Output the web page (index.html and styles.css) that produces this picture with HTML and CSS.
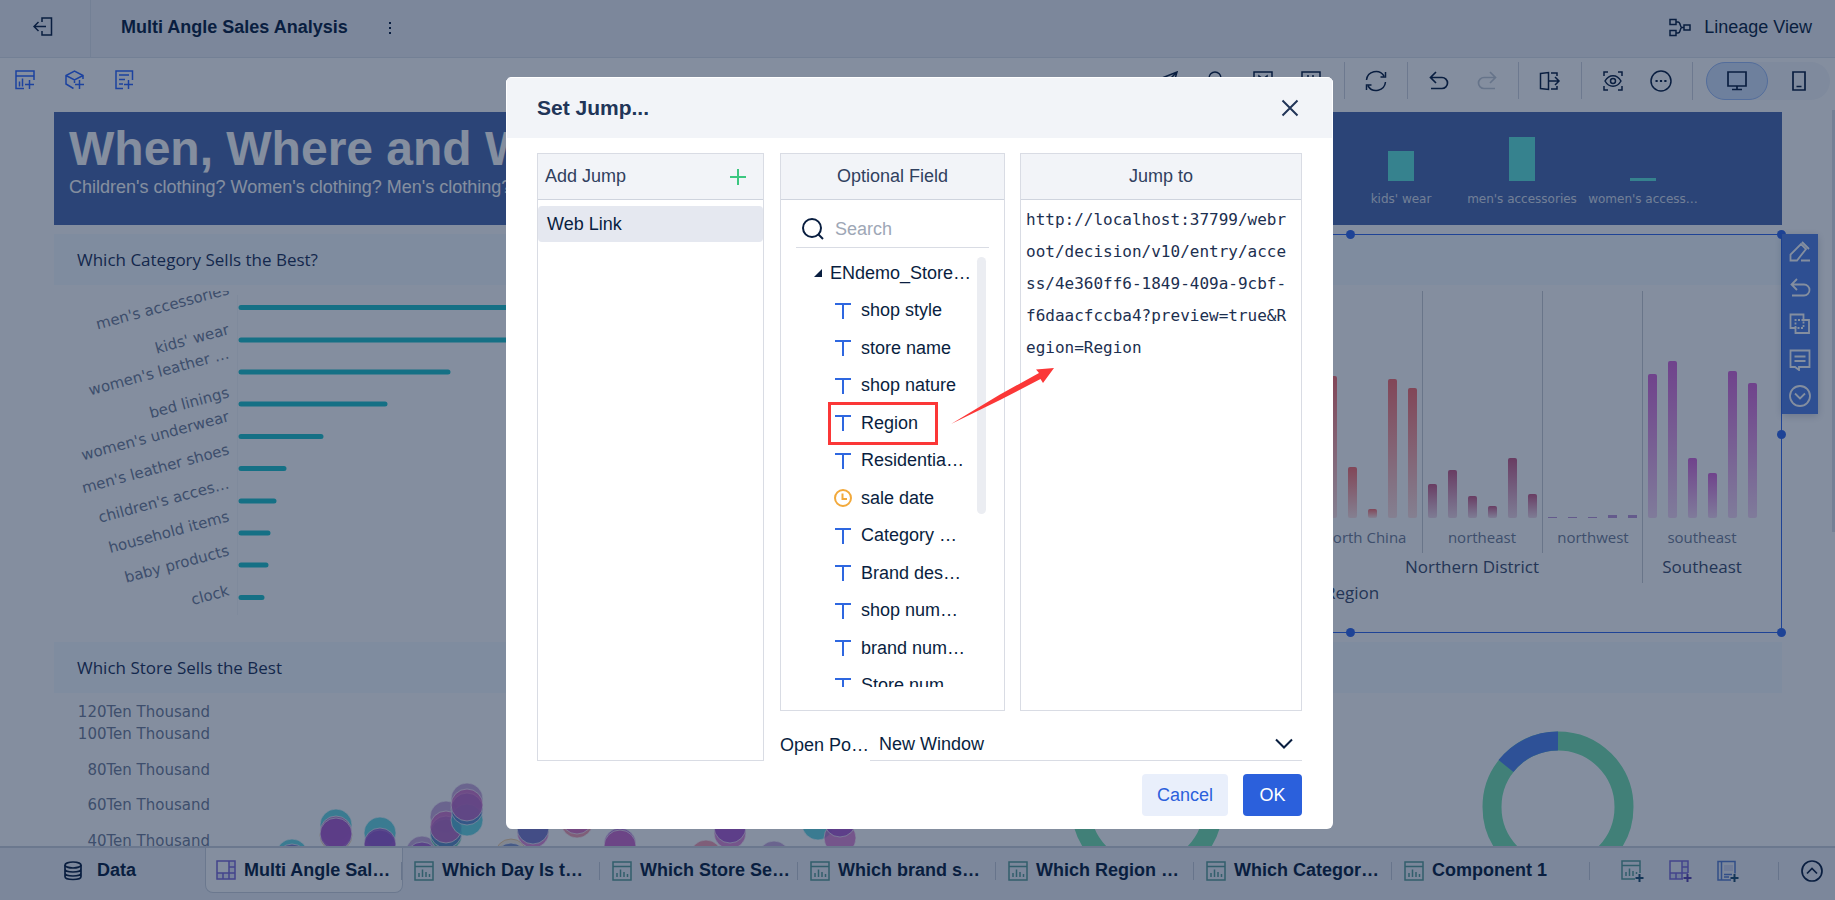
FILE: index.html
```html
<!DOCTYPE html>
<html lang="en">
<head>
<meta charset="utf-8">
<title>Multi Angle Sales Analysis</title>
<link rel="stylesheet" href="styles.css">
</head>
<body>
<div class="app">
  <header class="topbar">
    <button class="back" aria-label="Exit"><svg class="ic" width="20" height="20" viewBox="0 0 20 20"><path d="M9 5V1h9.500v17H9v-4M13 9.500H1M5.500 5L1 9.500 5.500 14"/></svg></button>
    <h1 class="doc-title">Multi Angle Sales Analysis</h1>
    <button class="kebab" aria-label="More"><svg width="4" height="14" viewBox="0 0 4 14"><path d="M1 1h2v2H1zM1 6h2v2H1zM1 11h2v2H1z" fill="#091e40"/></svg></button>
    <a class="lineage" href="#"><svg class="ic" width="22" height="20" viewBox="0 0 22 20"><path d="M1 1.500h6v5H1zM1 12.500h6v5H1zM15 7h6v5h-6zM7 4h2c3 0 1.500 5.500 4 5.500h2M7 15h2c3 0 1.500-5.500 4-5.500"/></svg>Lineage View</a>
  </header>

  <div class="toolbar">
    <div class="tools-left">
      <button aria-label="Add component"><svg class="ic blue" width="20" height="20" viewBox="0 0 20 20"><path d="M9 18.500H1V1h18v9M1 6h18M4.500 16.500v-5M7.500 16.500V8.500M14.500 10v9M10 14.500h9"/></svg></button>
      <button aria-label="Add model"><svg class="ic blue" width="20" height="20" viewBox="0 0 20 20"><path d="M8.500 18.500L1 14V5.500L9.500 1 18 5.500V9M1 5.500L9.500 10 18 5.500M9.500 10v3M14.500 10v9M10 14.500h9"/></svg></button>
      <button aria-label="Add text"><svg class="ic blue" width="20" height="20" viewBox="0 0 20 20"><path d="M8 18.500H1V1h16.500v9M4 5h10M4 9.500h6M4 14h4M13.500 10v9M9 14.500h9"/></svg></button>
    </div>
    <div class="tools-right">
      <div class="tgroup first">
        <button aria-label="Share"><svg class="ic" width="22" height="20" viewBox="0 0 22 20"><path d="M1 9L21 1l-5 17-6-6zM10 12L21 1"/></svg></button>
        <button aria-label="Alerts"><svg class="ic" width="20" height="20" viewBox="0 0 20 20"><path d="M4 15V7a6 6 0 0 1 12 0v8zM2 15h16M8 18h4"/></svg></button>
        <button aria-label="Template"><svg class="ic" width="20" height="20" viewBox="0 0 20 20"><path d="M1 1h18v17H1zM6 10V5l4 3 4-3v5"/></svg></button>
        <button aria-label="Layout"><svg class="ic" width="20" height="20" viewBox="0 0 20 20"><path d="M1 1h18v17H1zM7 4v6M12 4v6"/></svg></button>
      </div>
      <div class="tgroup">
        <button aria-label="Refresh"><svg class="ic" width="22" height="22" viewBox="0 0 22 22"><path d="M1.500 10A9.500 9.500 0 0 1 19 6M20.500 2v5h-5M20.500 12A9.500 9.500 0 0 1 3 16M1.500 20v-5h5"/></svg></button>
      </div>
      <div class="tgroup">
        <button aria-label="Undo"><svg class="ic thick" width="20" height="20" viewBox="0 0 20 20"><path d="M7 1L1.500 6.500 7 12M1.500 6.500H13a5.500 5.500 0 0 1 0 11H2"/></svg></button>
        <button aria-label="Redo"><svg class="ic thick off" width="20" height="20" viewBox="0 0 20 20"><path d="M13 1l5.500 5.500L13 12M18.500 6.500H7a5.500 5.500 0 0 0 0 11h11"/></svg></button>
      </div>
      <div class="tgroup">
        <button aria-label="Export"><svg class="ic" width="22" height="20" viewBox="0 0 22 20"><path d="M1.500 2.500l8-1v17l-8-1zM12 2h6v3M12 18h6v-3M9.500 10H20M16 6l4 4-4 4"/></svg></button>
      </div>
      <div class="tgroup">
        <button aria-label="Preview"><svg class="ic" width="20" height="20" viewBox="0 0 20 20"><path d="M1 5V1h4M15 1h4v4M19 15v4h-4M5 19H1v-4M2 10c4-7 12-7 16 0-4 7-12 7-16 0z"/><circle cx="10" cy="10" r="2.500"/></svg></button>
        <button aria-label="More actions"><svg class="ic" width="22" height="22" viewBox="0 0 22 22"><circle cx="11" cy="11" r="10"/><path stroke-width="2" d="M5.500 11h2.200M9.900 11h2.200M14.300 11h2.200"/></svg></button>
      </div>
      <div class="tgroup devices-group">
        <div class="devices">
          <button class="on" aria-label="Desktop"><svg class="ic thick" width="20" height="20" viewBox="0 0 20 20"><path d="M1 1h18v14H1zM10 15v3.500M5 18.500h10"/></svg></button>
          <button aria-label="Phone"><svg class="ic thick" width="14" height="20" viewBox="0 0 14 20"><path d="M1 1h12v18H1zM4.500 15.500h5"/></svg></button>
        </div>
      </div>
    </div>
  </div>

  <main class="canvas">
    <section class="banner">
      <div class="banner-text">
        <h2>When, Where and What to Sell</h2>
        <p>Children's clothing? Women's clothing? Men's clothing?</p>
      </div>
      <svg class="banner-chart" width="440" height="113" viewBox="-40 0 440 113">
        <path class="mint" d="M6 39h26v30H6zM127 25h26v44h-26zM248 66h26v3h-26z"/>
        <text x="19" y="91">kids' wear</text><text x="140" y="91">men's accessories</text><text x="261" y="91">women's access…</text>
      </svg>
    </section>

    <div class="cards">
      <section class="card">
        <h3>Which Category Sells the Best?</h3>
        <svg class="chart" viewBox="0 0 864 348">
          <path class="axis" d="M183.500 10v320"/>
          <g class="hbars">
            <path d="M187 22.500H700M187 55H600M187 87H394M187 119H331M187 151.500H267M187 183.500H230M187 216H220M187 248H214M187 280H212M187 312.500H208"/>
          </g>
          <svg y="6" width="864" height="342" viewBox="0 6 864 342">
            <g class="slant">
              <text transform="translate(176 9) rotate(-15)">men's accessories</text>
              <text transform="translate(176 49) rotate(-15)">kids' wear</text>
              <text transform="translate(176 73) rotate(-15)">women's leather …</text>
              <text transform="translate(176 112) rotate(-15)">bed linings</text>
              <text transform="translate(176 136) rotate(-15)">women's underwear</text>
              <text transform="translate(176 169) rotate(-15)">men's leather shoes</text>
              <text transform="translate(176 203) rotate(-15)">children's acces…</text>
              <text transform="translate(176 236) rotate(-15)">household items</text>
              <text transform="translate(176 270) rotate(-15)">baby products</text>
              <text transform="translate(176 310) rotate(-15)">clock</text>
            </g>
          </svg>
        </svg>
      </section>

      <section class="card selected">
        <h3></h3>
        <svg class="chart" viewBox="0 0 864 348">
          <defs>
            <linearGradient id="gr" x2="0" y2="1"><stop stop-color="#fa6f70"/><stop offset="1" stop-color="#fa6f70" stop-opacity=".2"/></linearGradient>
            <linearGradient id="gm" x2="0" y2="1"><stop stop-color="#c85b84"/><stop offset="1" stop-color="#c86ba0" stop-opacity=".25"/></linearGradient>
            <linearGradient id="gp" x2="0" y2="1"><stop stop-color="#d667d8"/><stop offset="1" stop-color="#d667d8" stop-opacity=".25"/></linearGradient>
          </defs>
          <path class="split" d="M504.500 6v262M624.500 6v262M724.500 6v292"/>
          <g fill="url(#gr)">
            <rect x="410" y="91" width="9" height="142" rx="2"/><rect x="430" y="182" width="9" height="51" rx="2"/><rect x="450" y="224" width="9" height="9" rx="2"/><rect x="470" y="94" width="9" height="139" rx="2"/><rect x="490" y="103" width="9" height="130" rx="2"/>
          </g>
          <g fill="url(#gm)">
            <rect x="510" y="199" width="9" height="34" rx="2"/><rect x="530" y="185" width="9" height="48" rx="2"/><rect x="550" y="211" width="9" height="22" rx="2"/><rect x="570" y="221" width="9" height="12" rx="2"/><rect x="590" y="173" width="9" height="60" rx="2"/><rect x="610" y="209" width="9" height="24" rx="2"/>
          </g>
          <path fill="#be97d8" d="M630 232h9v1h-9zM650 232h9v1h-9zM670 232h9v1h-9zM690 230h9v3h-9zM710 230h9v3h-9z"/>
          <g fill="url(#gp)">
            <rect x="730" y="89" width="9" height="144" rx="2"/><rect x="750" y="76" width="9" height="157" rx="2"/><rect x="770" y="173" width="9" height="60" rx="2"/><rect x="790" y="188" width="9" height="45" rx="2"/><rect x="810" y="86" width="9" height="147" rx="2"/><rect x="830" y="98" width="9" height="135" rx="2"/>
          </g>
          <g class="cats">
            <text x="446" y="258">North China</text><text x="564" y="258">northeast</text><text x="675" y="258">northwest</text><text x="784" y="258">southeast</text>
          </g>
          <g class="groups">
            <text x="554" y="288">Northern District</text><text x="784" y="288">Southeast</text><text x="434" y="314">Region</text>
          </g>
        </svg>
        <i class="handle tl"></i><i class="handle tm"></i><i class="handle tr"></i><i class="handle mr"></i><i class="handle br"></i><i class="handle bm"></i>
        <div class="sidebar">
          <button aria-label="Edit"><svg class="ic" width="22" height="22" viewBox="0 0 22 22"><path d="M1.500 19.500v-6L12 3l5 5L8 19.500zM13 1l7 7M12 19.500h9"/></svg></button>
          <button aria-label="Revert"><svg class="ic" width="22" height="22" viewBox="0 0 22 22"><path d="M8 2L2.500 7.500 8 13M2.500 7.500H15a5.500 5.500 0 0 1 0 11H3"/></svg></button>
          <button aria-label="Copy"><svg class="ic" width="22" height="22" viewBox="0 0 22 22"><path d="M6.500 15H1.500V1.500h13V7h5.500v13H6.500z"/><path stroke-dasharray="2 1.500" d="M6.500 15V7h8v8z"/></svg></button>
          <button aria-label="Comment"><svg class="ic" width="22" height="22" viewBox="0 0 22 22"><path d="M1.500 1.500h19V18H10v3l-4-3H1.500zM5.500 7.500h11M5.500 12h11"/></svg></button>
          <button aria-label="More"><svg class="ic" width="22" height="22" viewBox="0 0 22 22"><circle cx="11" cy="11" r="10"/><path d="M6 8.500l5 5 5-5"/></svg></button>
        </div>
      </section>

      <section class="card">
        <h3>Which Store Sells the Best</h3>
        <svg class="chart" viewBox="0 0 864 348">
          <g class="yaxis">
            <text x="156" y="24">120Ten Thousand</text><text x="156" y="46">100Ten Thousand</text><text x="156" y="82">80Ten Thousand</text><text x="156" y="117">60Ten Thousand</text><text x="156" y="153">40Ten Thousand</text>
          </g>
          <g class="bubbles">
            <circle class="c" cx="238" cy="162" r="16"/><circle class="p" cx="238" cy="167" r="16"/>
            <circle class="c" cx="282" cy="132" r="16"/><circle class="o" cx="282" cy="142" r="16"/><circle class="k" cx="282" cy="139" r="16"/><circle class="v" cx="282" cy="141" r="16"/>
            <circle class="c" cx="326" cy="140" r="16"/><circle class="p" cx="326" cy="153" r="16"/><circle class="v" cx="326" cy="151" r="16"/>
            <circle class="m" cx="368" cy="159" r="16"/><circle class="v" cx="368" cy="165" r="16"/>
            <circle class="m" cx="392" cy="124" r="16"/><circle class="g" cx="392" cy="142" r="16"/><circle class="b" cx="392" cy="139" r="16"/><circle class="k" cx="392" cy="134" r="16"/>
            <circle class="m" cx="413" cy="106" r="16"/><circle class="c" cx="413" cy="127" r="16"/><circle class="b" cx="413" cy="116" r="16"/><circle class="k" cx="413" cy="112" r="16"/>
            <circle class="o" cx="457" cy="162" r="16"/><circle class="b" cx="457" cy="166" r="16"/>
            <circle class="k" cx="479" cy="139" r="16"/><circle class="b" cx="479" cy="135" r="16"/>
            <circle class="s" cx="523" cy="129" r="16"/><circle class="k" cx="523" cy="125" r="16"/>
            <circle class="v" cx="566" cy="151" r="16"/><circle class="k" cx="566" cy="153" r="16"/>
            <circle class="s" cx="652" cy="163" r="16"/><circle class="k" cx="676" cy="140" r="16"/><circle class="v" cx="676" cy="134" r="16"/>
            <circle class="m" cx="720" cy="164" r="16"/>
            <circle class="c" cx="764" cy="131" r="16"/><circle class="k" cx="786" cy="145" r="16"/><circle class="v" cx="786" cy="128" r="16"/>
          </g>
        </svg>
      </section>

      <section class="card">
        <h3></h3>
        <svg class="chart" viewBox="0 0 864 348">
          <g class="donut">
            <circle cx="229" cy="114" r="66"/><circle cx="640" cy="114" r="66"/>
            <path d="M588 73A66 66 0 0 1 640 48"/>
          </g>
        </svg>
      </section>
    </div>
    <i class="scroll-thumb"></i>
  </main>

  <footer class="tabs">
    <button class="data"><svg class="ic thick" width="18" height="20" viewBox="0 0 18 20"><ellipse cx="9" cy="4" rx="8" ry="3"/><path d="M1 4v11.500c0 4 16 4 16 0V4M1 8c0 4 16 4 16 0M1 12c0 4 16 4 16 0"/></svg>Data</button>
    <button class="tab active"><svg class="ic violet" width="20" height="20" viewBox="0 0 20 20"><path class="tint" d="M13 1h6v18H1v-6h12z"/><path d="M1 1h18v18H1zM13 1v18M1 13h18M13 7h6M7 13v6"/></svg>Multi Angle Sal…</button>
    <button class="tab"><svg class="ic green" width="20" height="20" viewBox="0 0 20 20"><path d="M1 1h18v18H1zM1 5.500h18M5 16v-4M8.500 16V8.500M12 16v-5M15.500 16v-3"/></svg>Which Day Is t…</button>
    <button class="tab"><svg class="ic green" width="20" height="20" viewBox="0 0 20 20"><path d="M1 1h18v18H1zM1 5.500h18M5 16v-4M8.500 16V8.500M12 16v-5M15.500 16v-3"/></svg>Which Store Se…</button>
    <button class="tab"><svg class="ic green" width="20" height="20" viewBox="0 0 20 20"><path d="M1 1h18v18H1zM1 5.500h18M5 16v-4M8.500 16V8.500M12 16v-5M15.500 16v-3"/></svg>Which brand s…</button>
    <button class="tab"><svg class="ic green" width="20" height="20" viewBox="0 0 20 20"><path d="M1 1h18v18H1zM1 5.500h18M5 16v-4M8.500 16V8.500M12 16v-5M15.500 16v-3"/></svg>Which Region …</button>
    <button class="tab"><svg class="ic green" width="20" height="20" viewBox="0 0 20 20"><path d="M1 1h18v18H1zM1 5.500h18M5 16v-4M8.500 16V8.500M12 16v-5M15.500 16v-3"/></svg>Which Categor…</button>
    <button class="tab"><svg class="ic green" width="20" height="20" viewBox="0 0 20 20"><path d="M1 1h18v18H1zM1 5.500h18M5 16v-4M8.500 16V8.500M12 16v-5M15.500 16v-3"/></svg>Component 1</button>
    <div class="adders">
      <button aria-label="New component"><svg class="ic green" width="24" height="24" viewBox="0 0 24 24"><path d="M14 20H1V2h18v12M1 6.500h18M5 17v-4M8.500 17V9.500M12 17v-5M15.500 15v-2"/><path class="plus" d="M18.500 15v8M14.500 19h8"/></svg></button>
      <button aria-label="New dashboard"><svg class="ic violet" width="24" height="24" viewBox="0 0 24 24"><path class="tint" d="M13 2h6v12h-6v6H1v-6h12z"/><path d="M14 20H1V2h18v12M13 2v18M1 14h18M13 8h6M7 14v6"/><path class="plus plus-violet" d="M18.500 15v8M14.500 19h8"/></svg></button>
      <button aria-label="New report"><svg class="ic steel" width="24" height="24" viewBox="0 0 24 24"><path class="tint" d="M7 6h9v6H7z"/><path d="M14 21H1V2.500h17v12M4.500 2.500V21M7 15.500h8M7 18h5"/><path class="plus" d="M17.500 15v8M13.500 19h8"/></svg></button>
    </div>
    <button class="collapse" aria-label="Expand"><svg class="ic thick" width="22" height="22" viewBox="0 0 22 22"><circle cx="11" cy="11" r="10"/><path d="M6 13.500l5-5 5 5"/></svg></button>
  </footer>
</div>

<div class="backdrop">
  <div class="dialog" role="dialog" aria-labelledby="dlg-title">
    <div class="dlg-head">
      <h2 id="dlg-title">Set Jump...</h2>
      <button aria-label="Close"><svg width="18" height="18" viewBox="0 0 18 18"><path d="M1.500 1.500l15 15M16.500 1.500l-15 15"/></svg></button>
    </div>
    <div class="dlg-body">
      <section class="panel jumps">
        <div class="panel-head"><span>Add Jump</span><button aria-label="Add jump"><svg width="16" height="16" viewBox="0 0 16 16"><path d="M8 0v16M0 8h16"/></svg></button></div>
        <button class="jump-item">Web Link</button>
      </section>
      <div class="right">
        <section class="panel fields">
          <div class="panel-head">Optional Field</div>
          <div class="search"><svg width="22" height="22" viewBox="0 0 22 22"><circle cx="10" cy="10" r="9"/><path d="M16 16l5 5"/></svg><input type="text" placeholder="Search" aria-label="Search"></div>
          <div class="tree-wrap">
            <ul class="tree">
              <li class="root"><svg width="8" height="8" viewBox="0 0 8 8"><path d="M8 0v8H0z"/></svg>ENdemo_Store…</li>
              <li><svg class="t" width="18" height="18" viewBox="0 0 18 18"><path d="M1 2h16M9 2v15"/></svg>shop style</li>
              <li><svg class="t" width="18" height="18" viewBox="0 0 18 18"><path d="M1 2h16M9 2v15"/></svg>store name</li>
              <li><svg class="t" width="18" height="18" viewBox="0 0 18 18"><path d="M1 2h16M9 2v15"/></svg>shop nature</li>
              <li class="marked"><svg class="t" width="18" height="18" viewBox="0 0 18 18"><path d="M1 2h16M9 2v15"/></svg>Region</li>
              <li><svg class="t" width="18" height="18" viewBox="0 0 18 18"><path d="M1 2h16M9 2v15"/></svg>Residentia…</li>
              <li><svg class="clock" width="18" height="18" viewBox="0 0 18 18"><circle cx="9" cy="9" r="8"/><path d="M8.500 4.500V10H13"/></svg>sale date</li>
              <li><svg class="t" width="18" height="18" viewBox="0 0 18 18"><path d="M1 2h16M9 2v15"/></svg>Category …</li>
              <li><svg class="t" width="18" height="18" viewBox="0 0 18 18"><path d="M1 2h16M9 2v15"/></svg>Brand des…</li>
              <li><svg class="t" width="18" height="18" viewBox="0 0 18 18"><path d="M1 2h16M9 2v15"/></svg>shop num…</li>
              <li><svg class="t" width="18" height="18" viewBox="0 0 18 18"><path d="M1 2h16M9 2v15"/></svg>brand num…</li>
              <li><svg class="t" width="18" height="18" viewBox="0 0 18 18"><path d="M1 2h16M9 2v15"/></svg>Store num…</li>
            </ul>
            <i class="tree-thumb"></i>
          </div>
        </section>
        <section class="panel target">
          <label class="panel-head" for="url">Jump to</label>
          <textarea id="url" spellcheck="false">http://localhost:37799/webroot/decision/v10/entry/access/4e360ff6-1849-409a-9cbf-f6daacfccba4?preview=true&amp;Region=Region</textarea>
        </section>
        <div class="open-row">
          <label for="open">Open Po…</label>
          <div class="select"><select id="open"><option>New Window</option></select><svg width="18" height="12" viewBox="0 0 18 12"><path d="M1 1.500l8 8 8-8"/></svg></div>
        </div>
      </div>
      <svg class="pointer" width="103" height="56" viewBox="0 0 103 56"><path d="M0 56L49 26.500 88 5 85 1.500 103 0 92 15 89.500 11 49 32z"/></svg>
    </div>
    <div class="dlg-foot"><button class="cancel">Cancel</button><button class="ok">OK</button></div>
  </div>
</div>
</body>
</html>
```
FILE: styles.css
```css
*, *::before, *::after { box-sizing: border-box; }
body { margin: 0; font-family: "Liberation Sans", Arial, sans-serif; font-size: 18px; color: #091e40; overflow: hidden; }
h1, h2, h3, p, ul { margin: 0; padding: 0; }
button { font: inherit; color: inherit; background: none; border: 0; padding: 0; display: flex; align-items: center; justify-content: center; }
svg { display: block; flex: none; }
.ic { fill: none; stroke: #091e40; stroke-width: 1.5; }
.ic.thick { stroke-width: 1.7; }
.ic.off { stroke: #c3cad4; }
.ic.blue { stroke: #2e67ff; }
.ic.green { stroke: #5a9f98; }
.ic.violet { stroke: #7e6bd8; }
.ic.steel { stroke: #5a7fd0; }
.tint { fill: #5a55d0; fill-opacity: .15; stroke: none; }
.plus { stroke: #1e4f70; stroke-width: 2; }
.plus-violet { stroke: #5a45b0; }

.app { height: 100vh; display: flex; flex-direction: column; background: #fff; }

.topbar { height: 58px; flex: none; display: flex; align-items: center; background: #eef1f6; border-bottom: 1px solid #dde2ea; padding: 0 23px 2px 0; }
.back { width: 91px; height: 57px; margin-bottom: -2px; padding-right: 5px; padding-bottom: 3px; border-right: 1px solid #dde2ea; }
.doc-title { font-size: 18px; font-weight: bold; margin-left: 30px; }
.kebab { width: 20px; margin-left: 32px; height: 30px; }
.lineage { margin-left: auto; display: flex; align-items: center; gap: 13px; color: inherit; text-decoration: none; }

.toolbar { height: 42px; flex: none; display: flex; justify-content: space-between; padding: 4px 5px 0 15px; }
.tools-left { display: flex; gap: 30px; padding-bottom: 3px; }
.tools-right { display: flex; }
.tgroup { display: flex; border-left: 1px solid #d0d5df; padding: 0 7px; margin-bottom: 1px; }
.tgroup button { width: 48px; }
.tgroup.first { border: 0; padding-right: 9px; }
.devices-group { padding: 0 0 0 13px; margin-bottom: 0; }
.devices { display: flex; background: #f4f7fa; border-radius: 19px; }
.devices button { width: 62px; height: 38px; border-radius: 19px; }
.devices .on { background: #d3e2fb; border: 1px solid #9cbcf6; }

.canvas { flex: 1; min-height: 0; overflow: hidden; position: relative; padding: 12px 53px 0 54px; }
.banner { height: 113px; background: #4c6bae; display: flex; justify-content: space-between; color: #fff; }
.banner-text { padding: 9px 0 0 15px; }
.banner h2 { font-size: 48px; line-height: 56px; }
.banner p { line-height: 20px; }
.banner-chart .mint { fill: #62e7dc; }
.banner-chart text { font: 12px "DejaVu Sans", sans-serif; fill: #fff; fill-opacity: .8; text-anchor: middle; }

.cards { display: grid; grid-template-columns: 1fr 1fr; row-gap: 9px; margin-top: 9px; }
.card { position: relative; }
.card h3 { height: 51px; padding-left: 23px; background: #f5fbff; font: 17px/51px "Open Sans", sans-serif; color: #1c3158; }
.chart { width: 100%; height: auto; }
.chart text { fill: #727f98; }
.axis { stroke: #f4f6f8; }
.hbars { stroke: #20c3ca; stroke-width: 5; stroke-linecap: round; }
.slant text, .yaxis text { font: 15px "DejaVu Sans", sans-serif; text-anchor: end; }
.split { stroke: #c8cdd2; }
.cats text { font: 15px "Open Sans", sans-serif; text-anchor: middle; }
.chart .groups text { font: 17px "Open Sans", sans-serif; text-anchor: middle; fill: #3c4d6c; }
.bubbles circle { stroke: #fff; stroke-opacity: .7; fill-opacity: .75; }
.bubbles .c { fill: #38cbd8; }
.bubbles .p { fill: #8a6bc8; }
.bubbles .v { fill: #a04fd0; }
.bubbles .k { fill: #d667c8; }
.bubbles .m { fill: #b98fd0; }
.bubbles .b { fill: #5b78c8; }
.bubbles .g { fill: #3cc3a0; }
.bubbles .o { fill: #f8e8d0; stroke: #f0c080; }
.bubbles .s { fill: #f07f98; }
.donut { fill: none; stroke: #78e3b0; stroke-width: 19; }
.donut path { stroke: #5285ee; }

.selected::after { content: ""; position: absolute; inset: 0; border: 1px solid #3269ec; }
.handle { position: absolute; z-index: 1; width: 9px; height: 9px; margin: -4px; border-radius: 50%; background: #3269ec; }
.tl, .tm, .tr { top: 0; }
.tm, .bm { left: 50%; }
.tl { left: 0; }
.tr, .mr, .br { right: 0; }
.mr { top: 50%; }
.br, .bm { bottom: 0; }
.sidebar { position: absolute; z-index: 2; left: 100%; top: 0; background: #5281e4; box-shadow: 0 2px 8px rgba(9, 30, 64, .2); }
.sidebar button { width: 36px; height: 36px; }
.sidebar .ic { stroke: #fff; stroke-width: 1.8; }
.scroll-thumb { position: absolute; right: 0; top: 10px; width: 3px; height: 422px; background: #dfe3ea; }

.tabs { height: 54px; flex: none; display: flex; background: #eef1f6; border-top: 2px solid #ccd2dd; padding-bottom: 7px; font-weight: bold; }
.data { width: 205px; gap: 15px; justify-content: flex-start; padding-left: 64px; }
.tab { position: relative; width: 198px; gap: 8px; justify-content: flex-start; padding-left: 11px; white-space: nowrap; }
.tab + .tab::before, .adders::before, .collapse::before { content: ""; position: absolute; left: -2px; top: 14px; width: 1px; height: 18px; background: #c4cad6; }
.tab.active { background: #fff; border: 1px solid #ccd2dd; border-top: 0; border-radius: 0 0 8px 8px; padding-left: 10px; }
.adders { position: relative; display: flex; gap: 24px; padding-left: 30px; }
.collapse { position: relative; margin-left: auto; width: 55px; padding-left: 9px; }

.backdrop { position: fixed; inset: 0; z-index: 10; background: rgba(10, 29, 64, .5); display: flex; align-items: center; justify-content: center; padding: 6px 0 0 4px; }
.dialog { width: 827px; background: #fff; border-radius: 6px; overflow: hidden; padding-bottom: 13px; }
.dlg-head { height: 61px; background: #f2f4f8; border: 1px solid #fff; border-bottom: 0; display: flex; align-items: center; justify-content: space-between; padding: 0 33px 0 30px; color: #213558; }
.dlg-head h2 { font-size: 21px; }
.dlg-head svg { fill: none; stroke: #213558; stroke-width: 2; }
.dlg-body { position: relative; display: flex; gap: 16px; padding: 15px 31px 13px; }
.panel { border: 1px solid #d9dce4; }
.panel-head { height: 46px; flex: none; display: flex; align-items: center; justify-content: center; background: #f2f4f8; border-bottom: 1px solid #cfd4de; color: #30415f; }
.jumps { width: 227px; flex: none; }
.jumps .panel-head { justify-content: space-between; padding: 0 17px 0 7px; }
.jumps .panel-head svg { fill: none; stroke: #3cc780; stroke-width: 2; }
.jump-item { width: 100%; height: 36px; margin-top: 6px; padding-left: 9px; justify-content: flex-start; background: #e5e8f0; border-radius: 4px; }
.right { flex: 1; display: grid; grid-template-columns: 225px 1fr; column-gap: 15px; }
.fields { height: 558px; }
.search { display: flex; align-items: center; gap: 11px; height: 34px; margin: 14px 15px 0; padding: 0 0 3px 6px; border-bottom: 1px solid #d9dce4; }
.search svg { fill: none; stroke: #091e40; stroke-width: 2; }
.search input { border: 0; outline: 0; padding: 0; width: 130px; font: inherit; background: none; }
.search input::placeholder { color: #9ea7b6; opacity: 1; }
.tree-wrap { position: relative; height: 433px; margin: 6px 15px 0; overflow: hidden; }
.tree { list-style: none; }
.tree li { display: flex; align-items: center; gap: 9px; height: 38px; padding-left: 38px; white-space: nowrap; }
.tree li:nth-child(even) { height: 37px; }
.tree .root { gap: 8px; padding-left: 18px; }
.root svg { fill: #091e40; }
.t { fill: none; stroke: #2e67e0; stroke-width: 2; }
.clock { fill: none; stroke: #f2a93b; stroke-width: 2; }
.marked { position: relative; }
.marked::after { content: ""; position: absolute; left: 32px; top: -2px; width: 110px; height: 43px; border: 3px solid #fb3737; }
.tree-thumb { position: absolute; right: 3px; top: 3px; width: 9px; height: 257px; border-radius: 5px; background: #ebedf2; }
.target { display: flex; flex-direction: column; }
.target textarea { flex: 1; border: 0; outline: 0; resize: none; padding: 4px 8px 0 5px; font: 16px/32px "DejaVu Sans Mono", monospace; color: #1c2f50; word-break: break-all; overflow: hidden; background: none; }
.open-row { grid-column: 1 / -1; display: flex; align-items: center; height: 32px; margin-top: 18px; }
.open-row label { width: 90px; }
.select { position: relative; flex: 1; height: 32px; border-bottom: 1px solid #d9dce4; }
.select select { appearance: none; width: 100%; height: 30px; border: 0; outline: 0; background: none; padding: 0 0 0 9px; font: inherit; color: inherit; }
.select svg { position: absolute; right: 9px; top: 9px; fill: none; stroke: #091e40; stroke-width: 2; pointer-events: none; }
.pointer { position: absolute; left: 445px; top: 230px; fill: #fb3737; }
.dlg-foot { display: flex; justify-content: flex-end; gap: 15px; padding-right: 31px; }
.dlg-foot button { height: 42px; border-radius: 4px; }
.cancel { width: 86px; background: #e9effb; color: #2b60dc; }
.ok { width: 59px; background: #2b60dc; color: #fff; }
```
